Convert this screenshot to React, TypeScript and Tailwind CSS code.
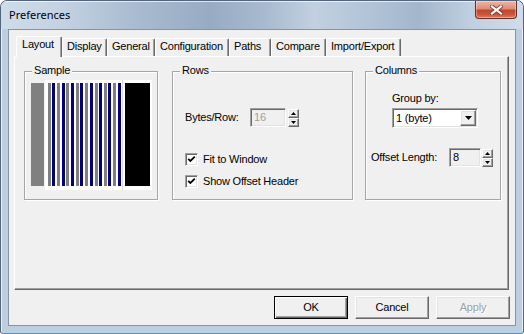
import React from "react";

const sunken =
  "border border-t-[#a0a0a0] border-l-[#a0a0a0] border-r-white border-b-white shadow-[inset_1px_1px_0_#696969,inset_-1px_-1px_0_#e3e3e3]";
const raised =
  "border border-t-white border-l-white border-r-[#696969] border-b-[#696969] shadow-[inset_-1px_-1px_0_#a0a0a0,inset_1px_1px_0_#e3e3e3]";

const tabs = [
  { label: "Layout", cls: "w-[46px]", sel: true },
  { label: "Display", cls: "w-[45px]", sel: false },
  { label: "General", cls: "w-[48px]", sel: false },
  { label: "Configuration", cls: "w-[74px]", sel: false },
  { label: "Paths", cls: "w-[42px]", sel: false },
  { label: "Compare", cls: "w-[55px]", sel: false },
  { label: "Import/Export", cls: "w-[75px]", sel: false },
];

const grayStripes = [17, 26, 35, 45, 54, 64, 73, 82];
const blueStripes = [21, 31, 40, 49, 59, 68, 77, 87];

function Spin() {
  return (
    <div className="flex flex-col w-[11px] h-[18px] self-start">
      <div className={`${raised} h-[9px] bg-[#f0f0f0] flex items-center justify-center`}>
        <svg width="5" height="3" viewBox="0 0 5 3">
          <path d="M2.5 0 L5 3 L0 3 Z" fill="#000" />
        </svg>
      </div>
      <div className={`${raised} h-[9px] bg-[#f0f0f0] flex items-center justify-center`}>
        <svg width="5" height="3" viewBox="0 0 5 3">
          <path d="M0 0 L5 0 L2.5 3 Z" fill="#000" />
        </svg>
      </div>
    </div>
  );
}

function Check({ label, cls }: { label: string; cls: string }) {
  return (
    <div className={`flex items-center h-[13px] ${cls}`}>
      <div className={`${sunken} w-[13px] h-[13px] bg-white flex items-center justify-center`}>
        <svg width="9" height="9" viewBox="0 0 9 9">
          <path d="M1.2 3.8 L3.4 6 L7.8 1.6" stroke="#000" strokeWidth="1.8" fill="none" />
        </svg>
      </div>
      <span className="ml-[5px] leading-[13px]">{label}</span>
    </div>
  );
}

function Group({ label, cls, children }: { label: string; cls: string; children?: React.ReactNode }) {
  return (
    <div
      className={`relative h-[129px] border border-[#a5a5a5] shadow-[inset_1px_1px_0_#fff,1px_1px_0_#fff] ${cls}`}
    >
      <span className="absolute top-[-8px] left-[7px] px-[2px] bg-[#f0f0f0] leading-[13px]">{label}</span>
      {children}
    </div>
  );
}

export default function App() {
  return (
    <div className="w-[524px] h-[334px] bg-white font-['Liberation_Sans',Arial,sans-serif] text-[11px] tracking-[-0.2px] text-black">
      <div className="w-[524px] h-[334px] flex flex-col rounded-t-[7px] rounded-b-[3px] border border-[#52657d] border-b-[#2ca6da] bg-[#bdcee1] overflow-hidden shadow-[inset_1px_0_0_rgba(255,255,255,0.7),inset_-1px_0_0_rgba(255,255,255,0.7)]">
        <div className="h-[28px] shrink-0 flex items-start justify-between bg-[linear-gradient(90deg,#cfdcea_0%,#c3d1e2_12%,#a9bbd0_26%,#97abc3_40%,#a7b9ce_50%,#c2d0e0_60%,#b3c4d8_70%,#a3b6cc_80%,#c0cfe1_90%,#d0dcea_100%)] shadow-[inset_0_1px_0_rgba(255,255,255,0.7)]">
          <span className="mt-[6px] ml-[8px] font-['Noto_Sans',sans-serif] text-[11px] tracking-normal leading-[15px]">
            Preferences
          </span>
          <div className="w-[42px] h-[18px] mr-[6px] rounded-b-[4px] border border-t-0 border-[#6d2a1f] bg-[linear-gradient(180deg,#ecb7a9_0%,#dd8d78_45%,#c4452d_55%,#c95840_80%,#db7d63_100%)] shadow-[inset_0_0_0_1px_rgba(255,255,255,0.35)] flex items-center justify-center">
            <svg width="13" height="10" viewBox="0 0 13 10">
              <path d="M2 1.5 L11 8.5 M11 1.5 L2 8.5" stroke="#7a3a2c" strokeWidth="3.8" strokeLinecap="square" />
              <path d="M2 1.5 L11 8.5 M11 1.5 L2 8.5" stroke="#ffffff" strokeWidth="2.2" strokeLinecap="square" />
            </svg>
          </div>
        </div>

        <div className="mx-[7px] h-[297px] shrink-0 border border-[#8393a9] bg-[#f0f0f0] flex flex-col">
          <div className="ml-[5px] mr-[6px] mt-[6px] flex flex-col">
            <div className="h-[20px] flex items-end pl-[2px]">
              {tabs.map((t) =>
                t.sel ? (
                  <div
                    key={t.label}
                    className={`${t.cls} relative z-10 h-[21px] -mb-[1px] bg-[#f0f0f0] border-t border-l border-r border-t-white border-l-white border-r-[#696969] shadow-[inset_-1px_0_0_#a0a0a0] rounded-t-[2px] flex items-center pl-[5px] pb-[5px]`}
                  >
                    {t.label}
                  </div>
                ) : (
                  <div
                    key={t.label}
                    className={`${t.cls} h-[18px] border-t border-l border-r border-t-white border-l-white border-r-[#696969] shadow-[inset_-1px_0_0_#a0a0a0] rounded-t-[2px] flex items-center pl-[4px] pb-[2px]`}
                  >
                    {t.label}
                  </div>
                )
              )}
            </div>
            <div className="h-[234px] border border-t-white border-l-white border-r-[#696969] border-b-[#696969] shadow-[inset_-1px_-1px_0_#a0a0a0] flex items-start pl-[9px] pt-[14px]">
              <Group label="Sample" cls="w-[134px] pl-[6px] pt-[8px]">
                <svg width="121" height="110" viewBox="0 0 121 110" className="block">
                  <rect x="0" y="3" width="13" height="103" fill="#808080" />
                  <rect x="14" y="0" width="107" height="110" fill="#ffffff" />
                  {grayStripes.map((x) => (
                    <rect key={"g" + x} x={x} y="3" width="3" height="103" fill="#808080" />
                  ))}
                  {blueStripes.map((x) => (
                    <rect key={"b" + x} x={x} y="3" width="3" height="103" fill="#000080" />
                  ))}
                  <rect x="91" y="0" width="1" height="110" fill="#dcdcdc" />
                  <rect x="94" y="3" width="25" height="103" fill="#000000" />
                </svg>
              </Group>
              <Group label="Rows" cls="w-[181px] ml-[14px] flex flex-col pl-[12px] pt-[36px]">
                <div className="flex items-center h-[19px]">
                  <span className="w-[65px]">Bytes/Row:</span>
                  <div className={`${sunken} w-[36px] h-[19px] bg-[#f0f0f0] text-[#a0a0a0] flex items-center pl-[3px]`}>
                    16
                  </div>
                  <div className="ml-[2px] flex">
                    <Spin />
                  </div>
                </div>
                <Check label="Fit to Window" cls="mt-[26px]" />
                <Check label="Show Offset Header" cls="mt-[9px]" />
              </Group>
              <Group label="Columns" cls="w-[136px] ml-[12px] flex flex-col pt-[20px]">
                <div className="pl-[26px] flex flex-col">
                  <span className="leading-[13px]">Group by:</span>
                  <div className={`${sunken} mt-[3px] w-[86px] h-[20px] bg-white flex items-stretch p-[1px]`}>
                    <span className="flex-1 flex items-center pl-[2px]">1 (byte)</span>
                    <div className={`${raised} w-[16px] bg-[#f0f0f0] flex items-center justify-center`}>
                      <svg width="7" height="4" viewBox="0 0 7 4">
                        <path d="M0 0 L7 0 L3.5 4 Z" fill="#000" />
                      </svg>
                    </div>
                  </div>
                </div>
                <div className="mt-[20px] pl-[5px] flex items-center h-[19px]">
                  <span className="w-[78px]">Offset Length:</span>
                  <div className={`${sunken} w-[32px] h-[19px] bg-[#f0f0f0] flex items-center pl-[3px]`}>8</div>
                  <div className="ml-[1px] flex">
                    <Spin />
                  </div>
                </div>
              </Group>
            </div>
          </div>
          <div className="mt-[6px] pr-[5px] flex justify-end gap-[7px]">
            <button className="w-[74px] h-[23px] border border-black bg-[#f0f0f0] shadow-[inset_1px_1px_0_#fff,inset_-1px_-1px_0_#696969,inset_-2px_-2px_0_#a0a0a0] flex items-center justify-center">
              OK
            </button>
            <button className={`${raised} w-[74px] h-[23px] bg-[#f0f0f0] flex items-center justify-center`}>
              Cancel
            </button>
            <button
              className={`${raised} w-[74px] h-[23px] bg-[#f0f0f0] text-[#a0a0a0] [text-shadow:1px_1px_0_#fff] flex items-center justify-center`}
            >
              Apply
            </button>
          </div>
        </div>
      </div>
    </div>
  );
}
